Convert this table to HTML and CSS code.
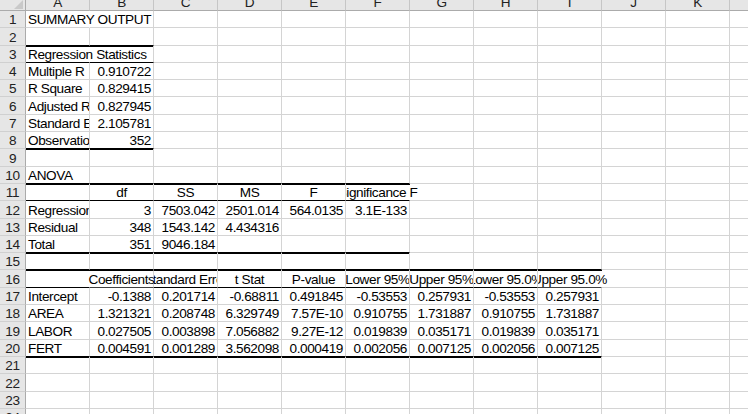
FILE: index.html
```html
<!DOCTYPE html>
<html>
<head>
<meta charset="utf-8">
<link rel="stylesheet" href="styles.css">
</head>
<body>
<div class="sheet">
<div class="corner"><svg width="9" height="9" viewBox="0 0 9 9"><polygon points="9,0 9,9 0,9" fill="#c9c9c9"/></svg></div><div class="ch">A</div><div class="ch">B</div><div class="ch">C</div><div class="ch">D</div><div class="ch">E</div><div class="ch">F</div><div class="ch">G</div><div class="ch">H</div><div class="ch">I</div><div class="ch">J</div><div class="ch">K</div><div class="ch">L</div>

<div class="rh">1</div><div class="c t sr nb">SUMMARY OUTPUT</div><div class="c"></div><div class="c"></div><div class="c"></div><div class="c"></div><div class="c"></div><div class="c"></div><div class="c"></div><div class="c"></div><div class="c"></div><div class="c"></div><div class="c"></div>

<div class="rh">2</div><div class="c tk"></div><div class="c tk"></div><div class="c"></div><div class="c"></div><div class="c"></div><div class="c"></div><div class="c"></div><div class="c"></div><div class="c"></div><div class="c"></div><div class="c"></div><div class="c"></div>

<div class="rh">3</div><div class="c t sr nb tn">Regression Statistics</div><div class="c tn"></div><div class="c"></div><div class="c"></div><div class="c"></div><div class="c"></div><div class="c"></div><div class="c"></div><div class="c"></div><div class="c"></div><div class="c"></div><div class="c"></div>

<div class="rh">4</div><div class="c t">Multiple R</div><div class="c n">0.910722</div><div class="c"></div><div class="c"></div><div class="c"></div><div class="c"></div><div class="c"></div><div class="c"></div><div class="c"></div><div class="c"></div><div class="c"></div><div class="c"></div>

<div class="rh">5</div><div class="c t">R Square</div><div class="c n">0.829415</div><div class="c"></div><div class="c"></div><div class="c"></div><div class="c"></div><div class="c"></div><div class="c"></div><div class="c"></div><div class="c"></div><div class="c"></div><div class="c"></div>

<div class="rh">6</div><div class="c t">Adjusted R Square</div><div class="c n">0.827945</div><div class="c"></div><div class="c"></div><div class="c"></div><div class="c"></div><div class="c"></div><div class="c"></div><div class="c"></div><div class="c"></div><div class="c"></div><div class="c"></div>

<div class="rh">7</div><div class="c t">Standard Error</div><div class="c n">2.105781</div><div class="c"></div><div class="c"></div><div class="c"></div><div class="c"></div><div class="c"></div><div class="c"></div><div class="c"></div><div class="c"></div><div class="c"></div><div class="c"></div>

<div class="rh">8</div><div class="c t tk">Observations</div><div class="c n tk">352</div><div class="c"></div><div class="c"></div><div class="c"></div><div class="c"></div><div class="c"></div><div class="c"></div><div class="c"></div><div class="c"></div><div class="c"></div><div class="c"></div>

<div class="rh">9</div><div class="c"></div><div class="c"></div><div class="c"></div><div class="c"></div><div class="c"></div><div class="c"></div><div class="c"></div><div class="c"></div><div class="c"></div><div class="c"></div><div class="c"></div><div class="c"></div>

<div class="rh">10</div><div class="c t tk">ANOVA</div><div class="c tk"></div><div class="c tk"></div><div class="c tk"></div><div class="c tk"></div><div class="c tk"></div><div class="c"></div><div class="c"></div><div class="c"></div><div class="c"></div><div class="c"></div><div class="c"></div>

<div class="rh">11</div><div class="c tn"></div><div class="c m tn">df</div><div class="c m tn">SS</div><div class="c m tn">MS</div><div class="c m tn">F</div><div class="c m tn sr nb">Significance F</div><div class="c"></div><div class="c"></div><div class="c"></div><div class="c"></div><div class="c"></div><div class="c"></div>

<div class="rh">12</div><div class="c t">Regression</div><div class="c n">3</div><div class="c n">7503.042</div><div class="c n">2501.014</div><div class="c n">564.0135</div><div class="c n">3.1E-133</div><div class="c"></div><div class="c"></div><div class="c"></div><div class="c"></div><div class="c"></div><div class="c"></div>

<div class="rh">13</div><div class="c t">Residual</div><div class="c n">348</div><div class="c n">1543.142</div><div class="c n">4.434316</div><div class="c"></div><div class="c"></div><div class="c"></div><div class="c"></div><div class="c"></div><div class="c"></div><div class="c"></div><div class="c"></div>

<div class="rh">14</div><div class="c t tk">Total</div><div class="c n tk">351</div><div class="c n tk">9046.184</div><div class="c tk"></div><div class="c tk"></div><div class="c tk"></div><div class="c"></div><div class="c"></div><div class="c"></div><div class="c"></div><div class="c"></div><div class="c"></div>

<div class="rh">15</div><div class="c tk"></div><div class="c tk"></div><div class="c tk"></div><div class="c tk"></div><div class="c tk"></div><div class="c tk"></div><div class="c tk"></div><div class="c tk"></div><div class="c tk"></div><div class="c"></div><div class="c"></div><div class="c"></div>

<div class="rh">16</div><div class="c tn nb"></div><div class="c m tn sl">Coefficients</div><div class="c m tn">Standard Error</div><div class="c m tn">t Stat</div><div class="c m tn">P-value</div><div class="c m tn">Lower 95%</div><div class="c m tn">Upper 95%</div><div class="c m tn">Lower 95.0%</div><div class="c m tn sr nb">Upper 95.0%</div><div class="c"></div><div class="c"></div><div class="c"></div>

<div class="rh">17</div><div class="c t">Intercept</div><div class="c n">-0.1388</div><div class="c n">0.201714</div><div class="c n">-0.68811</div><div class="c n">0.491845</div><div class="c n">-0.53553</div><div class="c n">0.257931</div><div class="c n">-0.53553</div><div class="c n">0.257931</div><div class="c"></div><div class="c"></div><div class="c"></div>

<div class="rh">18</div><div class="c t">AREA</div><div class="c n">1.321321</div><div class="c n">0.208748</div><div class="c n">6.329749</div><div class="c n">7.57E-10</div><div class="c n">0.910755</div><div class="c n">1.731887</div><div class="c n">0.910755</div><div class="c n">1.731887</div><div class="c"></div><div class="c"></div><div class="c"></div>

<div class="rh">19</div><div class="c t">LABOR</div><div class="c n">0.027505</div><div class="c n">0.003898</div><div class="c n">7.056882</div><div class="c n">9.27E-12</div><div class="c n">0.019839</div><div class="c n">0.035171</div><div class="c n">0.019839</div><div class="c n">0.035171</div><div class="c"></div><div class="c"></div><div class="c"></div>

<div class="rh">20</div><div class="c t tk">FERT</div><div class="c n tk">0.004591</div><div class="c n tk">0.001289</div><div class="c n tk">3.562098</div><div class="c n tk">0.000419</div><div class="c n tk">0.002056</div><div class="c n tk">0.007125</div><div class="c n tk">0.002056</div><div class="c n tk">0.007125</div><div class="c"></div><div class="c"></div><div class="c"></div>

<div class="rh">21</div><div class="c"></div><div class="c"></div><div class="c"></div><div class="c"></div><div class="c"></div><div class="c"></div><div class="c"></div><div class="c"></div><div class="c"></div><div class="c"></div><div class="c"></div><div class="c"></div>

<div class="rh">22</div><div class="c"></div><div class="c"></div><div class="c"></div><div class="c"></div><div class="c"></div><div class="c"></div><div class="c"></div><div class="c"></div><div class="c"></div><div class="c"></div><div class="c"></div><div class="c"></div>

<div class="rh">23</div><div class="c"></div><div class="c"></div><div class="c"></div><div class="c"></div><div class="c"></div><div class="c"></div><div class="c"></div><div class="c"></div><div class="c"></div><div class="c"></div><div class="c"></div><div class="c"></div>

<div class="rh">24</div><div class="c"></div><div class="c"></div><div class="c"></div><div class="c"></div><div class="c"></div><div class="c"></div><div class="c"></div><div class="c"></div><div class="c"></div><div class="c"></div><div class="c"></div><div class="c"></div>
</div>
</body>
</html>
```

FILE: styles.css
```css
html, body {
  margin: 0;
  padding: 0;
  background: #ffffff;
}

body {
  width: 748px;
  height: 414px;
  overflow: hidden;
  font-family: "Liberation Sans", Arial, sans-serif;
  font-size: 13.6px;
  letter-spacing: -0.4px;
  color: #000000;
}

.sheet {
  display: grid;
  grid-template-columns: 26px repeat(12, 64px);
  grid-template-rows: 11px repeat(24, 17.3px);
}

.c,
.rh,
.ch,
.corner {
  box-sizing: border-box;
  display: flex;
  align-items: flex-end;
  line-height: 15px;
  white-space: nowrap;
  overflow: hidden;
  min-width: 0;
}

.c {
  border-right: 1px solid #d4d4d4;
  border-bottom: 1px solid #d4d4d4;
}

.t {
  justify-content: flex-start;
  padding-left: 2px;
}

.n {
  justify-content: flex-end;
  padding-right: 2px;
}

.m {
  justify-content: center;
}

.nb {
  border-right-color: transparent;
}

.sr {
  overflow: visible;
  clip-path: inset(0 -400px 0 0);
}

.sl {
  overflow: visible;
  clip-path: inset(0 0 0 -400px);
}

.tn {
  border-bottom-color: #000000;
}

.tk {
  border-bottom-color: #000000;
  box-shadow: 0 1px 0 #000000;
}

.corner {
  background: #e6e6e6;
  border-right: 1px solid #ababab;
  border-bottom: 1px solid #ababab;
  justify-content: flex-end;
  padding: 0 2px 1px 0;
}

.ch {
  background: #e6e6e6;
  border-right: 1px solid #c6c6c6;
  border-bottom: 1px solid #ababab;
  justify-content: center;
  color: #222222;
}

.rh {
  background: #e6e6e6;
  border-right: 1px solid #ababab;
  border-bottom: 1px solid #d0d0d0;
  justify-content: center;
  color: #222222;
}
```
